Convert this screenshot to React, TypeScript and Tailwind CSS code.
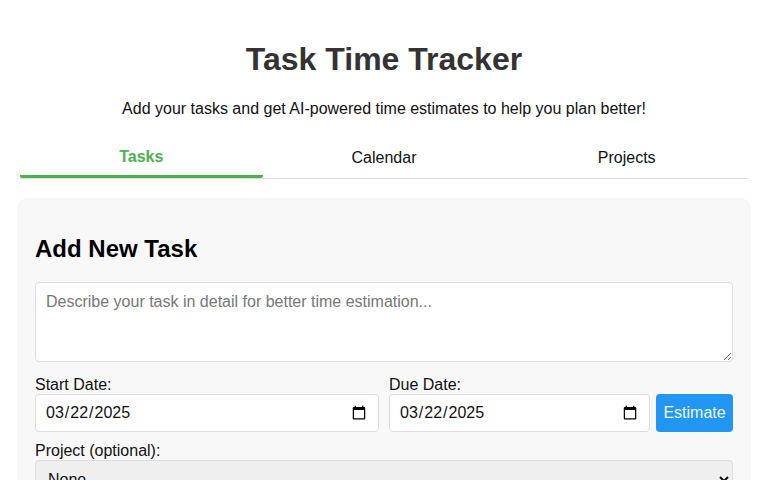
import { useState } from 'react'

const TABS = ['Tasks', 'Calendar', 'Projects']

export default function App() {
  const [tab, setTab] = useState('Tasks')
  const [desc, setDesc] = useState('')
  const [start, setStart] = useState('2025-03-22')
  const [due, setDue] = useState('2025-03-22')
  const [project, setProject] = useState('')

  return (
    <div className="min-h-screen bg-white text-[#333] font-['Liberation_Sans',Arial,sans-serif] pt-[41px]">
      <h1 className="text-[32px] leading-[37px] font-bold text-center text-[#333]">Task Time Tracker</h1>
      <p className="mt-[22px] text-[16px] leading-[18px] text-center text-[#111]">
        Add your tasks and get AI-powered time estimates to help you plan better!
      </p>

      <div className="mx-[20px] mt-[19px] flex border-b border-[#ddd]">
        {TABS.map(t => (
          <button
            key={t}
            onClick={() => setTab(t)}
            className={`flex-1 flex items-center justify-center text-[16px] leading-[18px] ${
              tab === t
                ? 'pt-[11px] pb-[9px] border-b-[3px] border-[#4caf50] text-[#4caf50] font-bold rounded-b-[2px]'
                : 'pt-[1px] text-[#111]'
            }`}
          >
            {t}
          </button>
        ))}
      </div>

      <div className="mx-[17px] mt-[19px] rounded-[10px] bg-[#f8f8f8] px-[18px] pt-[37px] pb-[20px]">
        <h2 className="text-[24px] leading-[28px] font-bold text-black">Add New Task</h2>

        <textarea
          value={desc}
          onChange={e => setDesc(e.target.value)}
          placeholder="Describe your task in detail for better time estimation..."
          className="mt-[19px] block w-full h-[80px] rounded-[4px] border border-[#ddd] bg-white px-[10px] py-[9px] text-[16px] leading-[20px] placeholder:text-[#777] outline-none"
        />

        <div className="mt-[13px] flex items-end">
          <div className="w-[344px] flex flex-col">
            <label className="pt-[1px] text-[16px] leading-[18px] text-[#111]">Start Date:</label>
            <input
              type="date"
              value={start}
              onChange={e => setStart(e.target.value)}
              className="h-[38px] rounded-[4px] border border-[#ddd] bg-white px-[9px] text-[16px] text-[#111]"
            />
          </div>
          <div className="ml-[10px] w-[261px] flex flex-col">
            <label className="pt-[1px] text-[16px] leading-[18px] text-[#111]">Due Date:</label>
            <input
              type="date"
              value={due}
              onChange={e => setDue(e.target.value)}
              className="h-[38px] rounded-[4px] border border-[#ddd] bg-white px-[9px] text-[16px] text-[#111]"
            />
          </div>
          <button className="ml-[6px] flex-1 h-[38px] rounded-[4px] bg-[#2196f3] text-[#eef7ff] text-[16px]">
            Estimate
          </button>
        </div>

        <div className="mt-[9px] flex flex-col">
          <label className="pt-[1px] text-[16px] leading-[18px] text-[#111]">Project (optional):</label>
          <select
            value={project}
            onChange={e => setProject(e.target.value)}
            className="h-[38px] rounded-[4px] border border-[#ddd] bg-[#efefef] px-[8px] text-[16px] text-[#111]"
          >
            <option value="">None</option>
            <option value="work">Work</option>
            <option value="personal">Personal</option>
          </select>
        </div>
      </div>
    </div>
  )
}
